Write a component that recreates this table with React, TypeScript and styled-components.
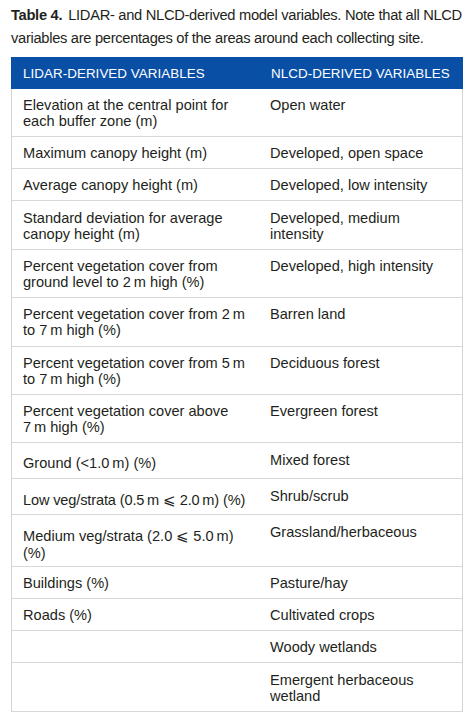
import React from "react";
import styled, { createGlobalStyle } from "styled-components";

const Global = createGlobalStyle`
  html, body { margin: 0; padding: 0; background: #ffffff; }
  body { font-family: "Liberation Sans", Arial, sans-serif; color: #231f20; }
`;

const Page = styled.div`
  width: 474px;
  padding: 4px 11px 0 11px;
  box-sizing: border-box;
`;

const Caption = styled.p`
  margin: 0;
  font-size: 14.7px;
  line-height: 22.5px;
  color: #231f20;
  letter-spacing: -0.3px;
  white-space: nowrap;
`;

const CaptionLabel = styled.b`
  font-weight: bold;
  margin-right: 6px;
`;

const Table = styled.div`
  margin-top: 8px;
  width: 452px;
  display: flex;
  flex-direction: column;
`;

const HeadRow = styled.div`
  display: grid;
  grid-template-columns: 248px 1fr;
  height: 32px;
  align-items: center;
  background: #0a4fa6;
  color: #ffffff;
  font-size: 13.4px;
  letter-spacing: 0.05px;
`;

const HeadCell = styled.div`
  padding-left: 12px;
  padding-top: 1px;
`;

const Body = styled.div`
  border-left: 1px solid #d4d4d4;
  border-right: 1px solid #d4d4d4;
`;

const Row = styled.div<{ $h: number }>`
  display: grid;
  grid-template-columns: 247px 1fr;
  min-height: ${(p) => p.$h}px;
  box-sizing: border-box;
  border-bottom: 1.5px solid #d8d8d8;
  font-size: 14.6px;
  line-height: 16.5px;
`;

const Cell = styled.div<{ $top: number }>`
  padding: ${(p) => p.$top}px 2px 0 11px;
  white-space: nowrap;
`;

const Tight = styled.span`
  letter-spacing: -0.15px;
`;

type R = { a: React.ReactNode; b: React.ReactNode; h: number; ta?: number; tb?: number };

const th = "\u2009";

const rows: R[] = [
  { a: <>Elevation at the central point for<br />each buffer zone (m)</>, b: "Open water", h: 48 },
  { a: "Maximum canopy height (m)", b: "Developed, open space", h: 32 },
  { a: "Average canopy height (m)", b: "Developed, low intensity", h: 32 },
  { a: <>Standard deviation for average<br />canopy height (m)</>, b: <>Developed, medium<br />intensity</>, h: 49, ta: 8.5, tb: 8.5 },
  { a: <>Percent vegetation cover from<br />ground level to 2{th}m high (%)</>, b: "Developed, high intensity", h: 48 },
  { a: <>Percent vegetation cover from 2{th}m<br />to 7{th}m high (%)</>, b: "Barren land", h: 49 },
  { a: <>Percent vegetation cover from 5{th}m<br />to 7{th}m high (%)</>, b: "Deciduous forest", h: 48 },
  { a: <>Percent vegetation cover above<br />7{th}m high (%)</>, b: "Evergreen forest", h: 48 },
  { a: <>Ground (&lt;1.0{th}m) (%)</>, b: "Mixed forest", h: 36, ta: 11.5, tb: 8.5 },
  { a: <Tight>Low veg/strata (0.5{th}m {"\u2A7D"} 2.0{th}m) (%)</Tight>, b: "Shrub/scrub", h: 36, ta: 12.5, tb: 8.5 },
  { a: <>Medium veg/strata (2.0 {"\u2A7D"} 5.0{th}m)<br />(%)</>, b: "Grassland/herbaceous", h: 52, ta: 13, tb: 8.5 },
  { a: "Buildings (%)", b: "Pasture/hay", h: 32 },
  { a: "Roads (%)", b: "Cultivated crops", h: 32 },
  { a: "", b: "Woody wetlands", h: 32 },
  { a: "", b: <>Emergent herbaceous<br />wetland</>, h: 49, ta: 8.5, tb: 8.5 },
];

export default function App() {
  return (
    <Page>
      <Global />
      <Caption>
        <CaptionLabel>Table 4.</CaptionLabel>
        LIDAR- and NLCD-derived model variables. Note that all NLCD
        <br />
        variables are percentages of the areas around each collecting site.
      </Caption>
      <Table>
        <HeadRow>
          <HeadCell>LIDAR-DERIVED VARIABLES</HeadCell>
          <HeadCell>NLCD-DERIVED VARIABLES</HeadCell>
        </HeadRow>
        <Body>
          {rows.map((r, i) => (
            <Row key={i} $h={r.h}>
              <Cell $top={r.ta ?? 7.5}>{r.a}</Cell>
              <Cell $top={r.tb ?? 7.5}>{r.b}</Cell>
            </Row>
          ))}
        </Body>
      </Table>
    </Page>
  );
}
